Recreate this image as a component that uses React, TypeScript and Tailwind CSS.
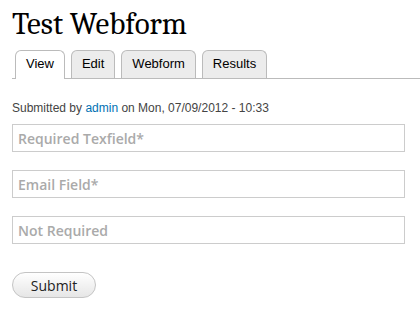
import React from "react";

const tabs = ["View", "Edit", "Webform", "Results"];
const fields = ["Required Texfield*", "Email Field*", "Not Required"];

export default function App() {
  return (
    <div className="min-h-[317px] w-[420px] bg-white">
      <h1 className="mt-[6px] pl-[12px] font-serif text-[31px] leading-[36px] font-normal text-black">
        Test Webform
      </h1>

      {/* Primary tabs */}
      <ul className="ml-[12px] mt-[8px] flex gap-[6px] border-b border-[#bbb] pl-[3px] font-['Liberation_Sans',Arial,sans-serif] text-[13px]">
        {tabs.map((t, i) => (
          <li
            key={t}
            className={
              i === 0
                ? "relative -mb-px flex h-[29px] items-center rounded-t-[6px] border border-b-0 border-[#bbb] bg-white px-[10px] pb-[2px] text-black"
                : "flex h-[28px] items-center rounded-t-[6px] border border-b-0 border-[#bbb] bg-[#ececec] px-[10px] pb-[1px] text-black"
            }
          >
            {t}
          </li>
        ))}
      </ul>

      <div className="pl-[12px]">
        <p className="mt-[20px] font-['Liberation_Sans',Arial,sans-serif] text-[12px] leading-[18px] text-[#444]">
          Submitted by <a className="text-[#0071b3]">admin</a> on Mon, 07/09/2012 - 10:33
        </p>

        <form className="mt-[7px] flex flex-col gap-[18px]" onSubmit={(e) => e.preventDefault()}>
          {fields.map((f) => (
            <input
              key={f}
              type="text"
              placeholder={f}
              className="h-[28px] w-[393px] border border-[#ccc] bg-white px-[5px] font-['Open_Sans',sans-serif] text-[14px] font-semibold text-[#333] outline-none placeholder:text-[#aaa]"
            />
          ))}
          <button
            type="submit"
            className="mt-[10px] h-[26px] w-[84px] rounded-full border border-[#c4c4c4] bg-gradient-to-b from-white to-[#e6e6e6] font-['Open_Sans',sans-serif] text-[14px] text-[#222]"
          >
            Submit
          </button>
        </form>
      </div>
    </div>
  );
}
